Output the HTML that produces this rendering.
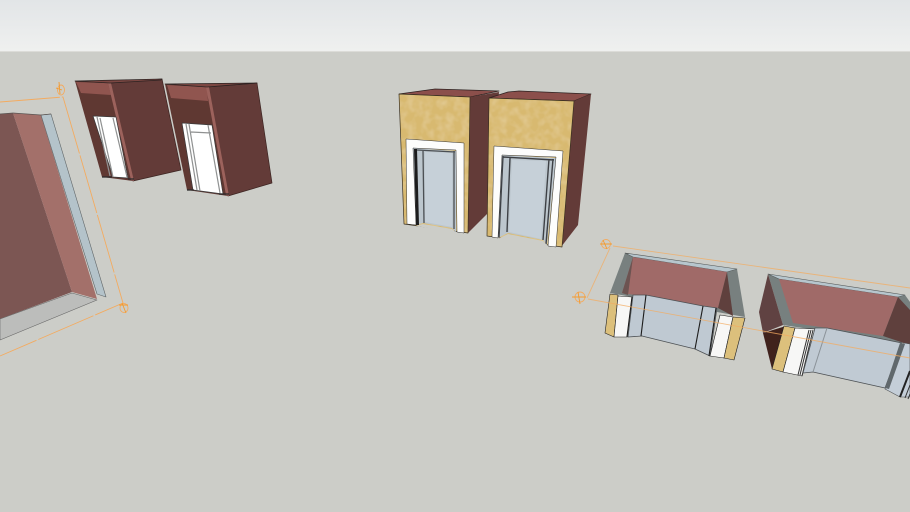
<!DOCTYPE html>
<html>
<head>
<meta charset="utf-8">
<style>
html,body{margin:0;padding:0;width:910px;height:512px;overflow:hidden;background:#cccdc8}
svg{display:block}
</style>
</head>
<body>
<svg width="910" height="512" viewBox="0 0 910 512" xmlns="http://www.w3.org/2000/svg">
<defs>
<linearGradient id="sky" x1="0" y1="0" x2="0" y2="1"><stop offset="0" stop-color="#e2e5e7"/><stop offset="1" stop-color="#eff0ef"/></linearGradient>
<filter id="tex" x="0" y="0" width="100%" height="100%"><feTurbulence type="fractalNoise" baseFrequency="0.13" numOctaves="2" seed="4"/><feColorMatrix values="0 0 0 0 0.92  0 0 0 0 0.8  0 0 0 0 0.55  0.55 0 0 0 -0.2"/><feComposite in2="SourceGraphic" operator="in"/><feMerge><feMergeNode in="SourceGraphic"/><feMergeNode/></feMerge></filter>
<filter id="soft" x="-2%" y="-2%" width="104%" height="104%"><feGaussianBlur stdDeviation="0.35"/></filter>
</defs>
<rect width="910" height="512" fill="#cccdc8"/>
<rect width="910" height="51" fill="url(#sky)"/>
<rect y="51" width="910" height="1" fill="#dcdcd8"/>

<g filter="url(#soft)">
<!-- left large object -->
<g stroke-linejoin="round">
<polygon points="0,114 13,113 72,292 0,319" fill="#7c5653"/>
<polygon points="13,113 41,115 97,299 72,292" fill="#a3706b"/>
<polygon points="41,115 51,114 106,297 97,294" fill="#b4c3ca" stroke="#606668" stroke-width=".6"/>
<polygon points="72,293 97,300 0,340 0,319" fill="#bcbdbb" stroke="#666" stroke-width=".6"/>
<polyline points="0,114 13,113 41,115 51,114" fill="none" stroke="#5b5553" stroke-width=".8"/>
</g>

<!-- orange guides left -->
<g fill="none" stroke="#f3ab60" stroke-width=".9">
<polyline points="0,102 63,97 123,303 0,356" stroke-dasharray="60 2"/>
<ellipse cx="61" cy="90" rx="3.5" ry="5"/><ellipse cx="124" cy="308" rx="4" ry="4.5"/>
<path d="M59 82L60 94M56 88L62 90M119 305H128M126 313L122 303" stroke="#f39a2e"/>
</g>

<!-- box 1 -->
<g stroke-linejoin="round">
<polygon points="75,81 110,83 133,181 102,177" fill="#5f3733"/>
<polygon points="110,83 162,79 181,170 133,181" fill="#643a37" stroke="#3c2624" stroke-width=".7"/>
<polygon points="76,82 108,83 111,95 81,93" fill="#90544f"/>
<polygon points="108,83 111,83 134,181 131,180" fill="#9c625c"/>
<polygon points="75,81 162,79 161,80 110,83" fill="#7c4743" stroke="#2d2422" stroke-width=".8"/>
<polygon points="93,116 116,117 128,178 113,177" fill="#fff" stroke="#3a3a3a" stroke-width=".7"/>
<path d="M97 117L110 176M100 118L113 177M113 118L127 177" stroke="#8f9191" stroke-width="1.2" fill="none"/>
<path d="M102 177H112M128 179H134" stroke="#2a2a2a" stroke-width="1.2"/>
</g>

<!-- box 2 -->
<g stroke-linejoin="round">
<polygon points="165,84 207,87 228,196 187,190" fill="#5f3733"/>
<polygon points="207,87 257,83 272,183 228,196" fill="#643a37" stroke="#3c2624" stroke-width=".7"/>
<polygon points="167,85 207,87 208,101 171,98" fill="#90544f"/>
<polygon points="206,87 209,87 229,196 226,195" fill="#9c625c"/>
<polygon points="165,84 257,83 207,87" fill="#7c4743" stroke="#2d2422" stroke-width=".8"/>
<polygon points="182,123 212,125 223,194 193,190" fill="#fff" stroke="#3a3a3a" stroke-width=".7"/>
<path d="M186 124L197 190M189 124L200 191M208 125L220 193M191 132L211 133" stroke="#8f9191" stroke-width="1.2" fill="none"/>
<path d="M187 190H194M219 194H229" stroke="#2a2a2a" stroke-width="1.2"/>
</g>

<!-- elevator A -->
<g stroke-linejoin="round">
<polygon points="399,94 435,89 499,91 470,97" fill="#8b4f4c" stroke="#2e2220" stroke-width=".8"/>
<polygon points="470,97 499,92 488,213 468,233" fill="#643a37"/>
<polygon points="399,94 470,97 468,233 404,224" fill="#d8b96f" filter="url(#tex)"/>
<polyline points="399,94 470,97 468,233 404,224 399,94" fill="none" stroke="#3a3020" stroke-width=".7"/>
<polygon points="413,148 456,151 456,232 452,228 423,223 416,225" fill="#bcc6cd"/>
<polygon points="406,139 464,143 464,233 457,232 456,150 413,148 416,225 407,224" fill="#fdfdfc" stroke="#333" stroke-width=".5"/>
<polygon points="414,149 417,149 419,225 416,225" fill="#1f1f1f"/>
<path d="M423 150L424 223M454 151L454 229M417 150L455 152" stroke="#4c4f52" stroke-width="1.3" fill="none"/>
<polygon points="425,152 452,153 452,227 425,222" fill="#c6d0d8"/>
<polygon points="416,226 423,224 452,229 457,233" fill="#cccdc8"/>
</g>

<!-- elevator B -->
<g stroke-linejoin="round">
<polygon points="489,98 508,92 519,91 591,94 574,101" fill="#8b4f4c" stroke="#2e2220" stroke-width=".8"/>
<polygon points="574,101 591,94 578,225 561,247" fill="#643a37"/>
<polygon points="489,98 574,101 562,247 487,236" fill="#d8b96f" filter="url(#tex)"/>
<polyline points="489,98 574,101 562,247 487,236 489,98" fill="none" stroke="#3a3020" stroke-width=".7"/>
<polygon points="500,155 556,158 547,245 543,240 508,233 498,238" fill="#bcc6cd"/>
<polygon points="494,146 563,151 556,247 548,246 556,157 502,155 498,238 492,237" fill="#fdfdfc" stroke="#333" stroke-width=".5"/>
<path d="M503 156L499 237M510 158L507 232M553 159L546 244M549 159L543 240M503 157L554 160" stroke="#3e4144" stroke-width="1.4" fill="none"/>
<polygon points="512,160 546,161 541,239 509,232" fill="#c6d0d8"/>
<polygon points="498,239 508,234 543,241 548,246" fill="#cccdc8"/>
</g>

<!-- plan view 1 -->
<g stroke-linejoin="round">
<polygon points="625,253 737,269 745,317 610,293" fill="#78807f"/>
<polygon points="625,253 737,269 727,272 633,257" fill="#b7c6cd" stroke="#565a5a" stroke-width=".6"/>
<polygon points="633,257 727,272 718,308 622,293" fill="#a06a67"/>
<polygon points="727,272 733,316 718,308" fill="#5e3f3e"/>
<polygon points="633,257 622,293 628,295" fill="#6c5351"/>
<polygon points="610,294 618,295 614,337 605,333" fill="#dcc07c" stroke="#222" stroke-width=".6"/>
<polygon points="618,296 632,297 627,337 614,337" fill="#f7f7f6" stroke="#222" stroke-width=".6"/>
<polygon points="633,295 646,295 703,306 717,308 710,356 695,349 642,336 628,337" fill="#bfc9d2" stroke="#4d5154" stroke-width=".8"/>
<path d="M646 295L641 336M703 306L695 349M632 297L627 337M716 308L709 356" stroke="#1f1f1f" stroke-width="1.1" fill="none"/>
<polygon points="720,315 733,317 724,358 710,356" fill="#f7f7f6" stroke="#222" stroke-width=".6"/>
<polygon points="733,317 745,318 734,360 724,358" fill="#dcc07c" stroke="#222" stroke-width=".6"/>
</g>

<!-- plan view 2 -->
<g stroke-linejoin="round">
<polygon points="768,274 905,295 910,302 910,344 783,325" fill="#77807f"/>
<polygon points="768,274 905,295 898,297 779,279" fill="#b7c6cd" stroke="#565a5a" stroke-width=".6"/>
<polygon points="779,279 898,297 883,336 793,323" fill="#a06a67"/>
<polygon points="768,274 783,325 763,333 759,312" fill="#614342"/>
<polygon points="763,333 786,326 772,369" fill="#40201c"/>
<polygon points="898,297 910,310 910,345 883,336" fill="#5e3f3e"/>
<polygon points="784,326 795,328 783,372 772,369" fill="#dcc07c" stroke="#222" stroke-width=".6"/>
<polygon points="795,328 815,329 802,376 783,372" fill="#f7f7f6" stroke="#222" stroke-width=".6"/>
<path d="M809 330L798 375M811 330L800 375M813 330L802 376" stroke="#333" stroke-width="1"/>
<polygon points="815,328 827,328 902,343 885,388 813,372 803,373" fill="#c0cad3" stroke="#4d5154" stroke-width=".8"/>
<path d="M827 328L813 372" stroke="#8a9298" stroke-width="1"/>
<polygon points="904,343 910,344 910,397 900,397 885,389" fill="#c4ced8" stroke="#4d5154" stroke-width=".6"/>
<polygon points="900,343 905,344 889,389 885,388" fill="#60686c"/>
<path d="M910 371L900 397" stroke="#222" stroke-width="2"/>
<path d="M905 398L910 385M908 399L910 394" stroke="#333" stroke-width="1"/>
</g>

<!-- orange guides right -->
<g fill="none" stroke="#f3ab60" stroke-width=".9">
<path d="M613 246L910 288M588 299L910 358M610 248L587 298" opacity=".75"/>
<circle cx="606" cy="244" r="4.5"/><circle cx="580" cy="297" r="5"/>
<path d="M600 244H612M572 297H586M607 249L603 240M580 304L578 292" stroke="#f39a2e"/>
</g>
</g>
</svg>
</body>
</html>
